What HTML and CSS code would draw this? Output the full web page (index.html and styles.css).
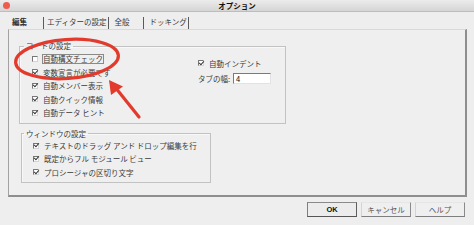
FILE: index.html
```html
<!DOCTYPE html>
<html lang="ja">
<head>
<meta charset="utf-8">
<title>オプション</title>
<link rel="stylesheet" href="styles.css">
</head>
<body>
<div class="window">
  <div class="titlebar"><span class="dot"></span><span class="title">オプション</span></div>
  <div class="tabs">
    <span class="tab tab-edit">編集</span>
    <span class="sep sep1"></span>
    <span class="tab tab-editor">エディターの設定</span>
    <span class="sep sep2"></span>
    <span class="tab tab-general">全般</span>
    <span class="sep sep3"></span>
    <span class="tab tab-dock">ドッキング</span>
    <span class="sep sep4"></span>
  </div>
  <div class="panel">
    <fieldset class="group group-code">
      <legend>コードの設定</legend>
      <div class="cols">
        <div class="col-left">
          <label class="row"><span class="cb"></span><span class="lbl focus">自動構文チェック</span></label>
          <label class="row"><span class="cb checked"></span><span class="lbl">変数宣言が必要です</span></label>
          <label class="row"><span class="cb checked"></span><span class="lbl">自動メンバー表示</span></label>
          <label class="row"><span class="cb checked"></span><span class="lbl">自動クイック情報</span></label>
          <label class="row"><span class="cb checked"></span><span class="lbl">自動データ ヒント</span></label>
        </div>
        <div class="col-right">
          <label class="row row-indent"><span class="cb checked"></span><span class="lbl">自動インデント</span></label>
          <div class="row row-tab"><span class="lbl">タブの幅:</span><span class="input">4</span></div>
        </div>
      </div>
    </fieldset>
    <fieldset class="group group-window">
      <legend>ウィンドウの設定</legend>
      <div class="col-win">
        <label class="row"><span class="cb checked"></span><span class="lbl">テキストのドラッグ アンド ドロップ編集を行</span></label>
        <label class="row"><span class="cb checked"></span><span class="lbl">既定からフル モジュール ビュー</span></label>
        <label class="row"><span class="cb checked"></span><span class="lbl">プロシージャの区切り文字</span></label>
      </div>
    </fieldset>
  </div>
  <div class="buttons">
    <span class="btn btn-default">OK</span>
    <span class="btn">キャンセル</span>
    <span class="btn">ヘルプ</span>
  </div>
  <svg class="annot" width="474" height="225" viewBox="0 0 474 225">
    <ellipse cx="67" cy="59" rx="51.5" ry="19.5" transform="rotate(-4 67 59)" fill="none" stroke="#e23b2e" stroke-width="3.2"/>
    <line x1="139" y1="117" x2="115" y2="87" stroke="#e23b2e" stroke-width="3.2" stroke-linecap="round"/>
    <polygon points="109,80 123,86.5 111,95" fill="#e23b2e"/>
  </svg>
</div>
</body>
</html>
```
FILE: styles.css
```css
html, body {
  margin: 0;
  padding: 0;
  background: #ececec;
}
body {
  font-family: "Noto Sans CJK JP", "Noto Sans", sans-serif;
  font-size: 7.5px;
  color: #3a3a3a;
}
.window {
  position: relative;
  width: 474px;
  height: 225px;
  overflow: hidden;
  background: #eeeeee;
}
.titlebar {
  position: relative;
  height: 11px;
  border-bottom: 1px solid #bdbdbd;
  background: linear-gradient(#ececec, #d5d5d5);
  display: flex;
  justify-content: center;
  align-items: center;
}
.title {
  font-weight: bold;
  color: #111;
  line-height: 11px;
}
.dot {
  position: absolute;
  left: 3px;
  top: 1.5px;
  width: 7px;
  height: 7px;
  border-radius: 50%;
  background: #ee5b4f;
}
.tabs {
  height: 17px;
  display: flex;
  align-items: flex-start;
  padding-left: 12px;
}
.tab {
  line-height: 10px;
  margin-top: 5px;
  color: #3a3a3a;
}
.tab-edit { font-weight: bold; color: #333; }
.sep {
  width: 1px;
  height: 12px;
  margin-top: 5px;
  background: #5a5a5a;
}
.sep1 { margin-left: 16px; }
.tab-editor { margin-left: 3px; }
.sep2 { margin-left: 2px; }
.tab-general { margin-left: 5px; }
.sep3 { margin-left: 14px; }
.tab-dock { margin-left: 5px; }
.sep4 { margin-left: 1.5px; }

.panel {
  box-sizing: border-box;
  margin-left: 8px;
  width: 459px;
  height: 168px;
  border-top: 1px solid #d9d9d9;
  border-left: 1px solid #a2a2a2;
  border-right: 2px solid #8e8e8e;
  border-bottom: 2px solid #8e8e8e;
  background: #efefef;
  display: flex;
  flex-direction: column;
  align-items: flex-start;
}
.group {
  margin: 0;
  padding: 0;
  min-width: 0;
  border: 1px solid #c2c2c2;
  box-shadow: inset 1px 1px 0 #f8f8f8;
}
.group legend {
  padding: 0 2px;
  line-height: 10px;
  color: #3a3a3a;
}
.group-code {
  margin-top: 11px;
  margin-left: 10px;
  width: 267px;
  box-sizing: border-box;
}
.group-code legend { margin-left: 4px; }
.group-window {
  margin-top: 5px;
  margin-left: 12px;
  width: 190px;
  box-sizing: border-box;
}
.group-window legend { margin-left: 2px; }

.cols {
  display: flex;
  padding: 1px 0 3px;
}
.col-left {
  box-sizing: border-box;
  width: 178px;
  padding-left: 12px;
}
.col-left .row { height: 13.5px; }
.col-right { padding-top: 4.5px; }
.row {
  display: flex;
  align-items: center;
  height: 13px;
  white-space: nowrap;
}
.lbl { line-height: 9px; }
.cb {
  position: relative;
  flex: none;
  box-sizing: border-box;
  width: 6px;
  height: 6px;
  margin-right: 5px;
  border: 1px solid;
  border-color: #777 #d4d4d4 #d4d4d4 #777;
  background: #fff;
}
.cb.checked::after {
  content: "";
  position: absolute;
  left: 0px;
  top: -0.5px;
  width: 4px;
  height: 2px;
  border-left: 1.2px solid #333;
  border-bottom: 1.2px solid #333;
  transform: rotate(-48deg);
}
.focus {
  display: inline-block;
  line-height: 8px;
  outline: 1px solid #8a8a8a;
}
.row-tab { margin-top: 2px; }
.input {
  box-sizing: border-box;
  width: 38px;
  height: 11px;
  margin-left: 3px;
  padding-left: 2px;
  line-height: 9px;
  background: #fff;
  border: 1px solid;
  border-color: #7a7a7a #e2e2e2 #e2e2e2 #7a7a7a;
  color: #111;
}
.col-win {
  padding: 0.5px 0 3.5px 11px;
}
.col-win .row { height: 13.3px; }

.buttons {
  display: flex;
  justify-content: flex-end;
  gap: 4px;
  margin-top: 5px;
  padding-right: 9px;
}
.btn {
  box-sizing: border-box;
  width: 50px;
  height: 15px;
  display: flex;
  align-items: center;
  justify-content: center;
  border: 1px solid;
  border-color: #e6e6e6 #8a8a8a #7e7e7e #d4d4d4;
  background: #efefef;
  color: #555;
  line-height: 10px;
}
.btn-default {
  border-color: #8a8a8a #5e5e5e #555 #7e7e7e;
  background: #ececec;
  color: #111;
  font-weight: bold;
  font-family: "Liberation Sans", sans-serif;
  font-size: 7.5px;
}
.annot {
  position: absolute;
  left: 0;
  top: 0;
  pointer-events: none;
}
```
